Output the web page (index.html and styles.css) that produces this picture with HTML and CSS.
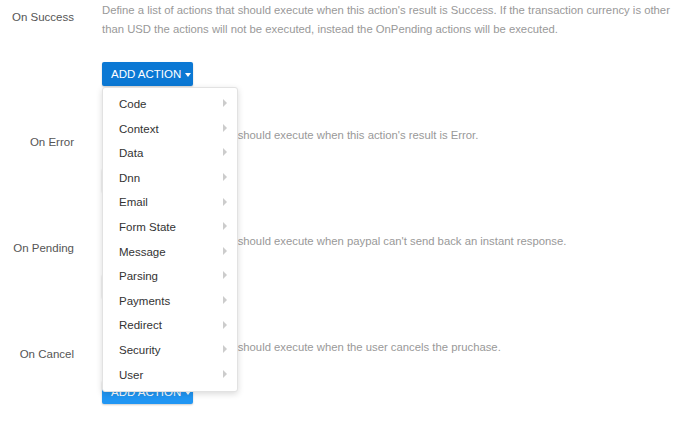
FILE: index.html
```html
<!DOCTYPE html>
<html>
<head>
<meta charset="utf-8">
<link rel="stylesheet" href="styles.css">
</head>
<body>
<div class="form">
  <div class="row">
    <div class="label">On Success</div>
    <div class="field">
      <p class="desc">Define a list of actions that should execute when this action's result is Success. If the transaction currency is other than USD the actions will not be executed, instead the OnPending actions will be executed.</p>
      <div class="dropdown">
        <button class="btn btn-active">ADD ACTION <span class="caret"></span></button>
        <ul class="menu">
          <li>Code<span class="arrow"></span></li>
          <li>Context<span class="arrow"></span></li>
          <li>Data<span class="arrow"></span></li>
          <li>Dnn<span class="arrow"></span></li>
          <li>Email<span class="arrow"></span></li>
          <li>Form State<span class="arrow"></span></li>
          <li>Message<span class="arrow"></span></li>
          <li>Parsing<span class="arrow"></span></li>
          <li>Payments<span class="arrow"></span></li>
          <li>Redirect<span class="arrow"></span></li>
          <li>Security<span class="arrow"></span></li>
          <li>User<span class="arrow"></span></li>
        </ul>
      </div>
    </div>
  </div>
  <div class="row">
    <div class="label">On Error</div>
    <div class="field">
      <p class="desc">Define a list of actions that should execute when this action's result is Error.</p>
      <button class="btn">ADD ACTION <span class="caret"></span></button>
    </div>
  </div>
  <div class="row">
    <div class="label">On Pending</div>
    <div class="field">
      <p class="desc">Define a list of actions that should execute when paypal can't send back an instant response.</p>
      <button class="btn">ADD ACTION <span class="caret"></span></button>
    </div>
  </div>
  <div class="row">
    <div class="label">On Cancel</div>
    <div class="field">
      <p class="desc">Define a list of actions that should execute when the user cancels the pruchase.</p>
      <button class="btn">ADD ACTION <span class="caret"></span></button>
    </div>
  </div>
</div>
</body>
</html>
```
FILE: styles.css
```css
html, body {
  margin: 0;
  padding: 0;
  background: #fff;
}
body {
  font-family: "Liberation Sans", Arial, sans-serif;
  font-size: 11.3px;
  color: #333;
}
.form {
  padding-top: 1px;
}
.row {
  display: grid;
  grid-template-columns: 74px 1fr;
  column-gap: 28px;
  margin-bottom: 40px;
}
.label {
  text-align: right;
  color: #555;
  padding-top: 7px;
  line-height: 19px;
  font-size: 11.5px;
}
.field {
  padding-right: 10px;
  display: flex;
  flex-direction: column;
  align-items: flex-start;
}
.desc {
  margin: 0 0 23px 0;
  color: #999;
  line-height: 19px;
  max-width: 590px;
}
.dropdown {
  position: relative;
}
.btn {
  height: 24px;
  width: 91px;
  padding: 0 0 0 9px;
  border: none;
  border-radius: 2px;
  background: #2196f3;
  color: #fff;
  font-family: "Liberation Sans", Arial, sans-serif;
  font-size: 11.5px;
  text-align: left;
  box-shadow: 0 1px 2px rgba(0,0,0,0.2);
  display: flex;
  align-items: center;
  gap: 4px;
}
.btn-active {
  background: #0b78d4;
}
.caret {
  width: 0;
  height: 0;
  border-left: 3.5px solid transparent;
  border-right: 3.5px solid transparent;
  border-top: 4px solid #fff;
  margin-top: 1px;
}
.menu {
  position: absolute;
  top: 25px;
  left: 0;
  z-index: 5;
  margin: 0;
  padding: 4px 0;
  list-style: none;
  width: 134px;
  background: #fff;
  border: 1px solid #e2e2e2;
  border-radius: 3px;
  box-shadow: 0 2px 6px rgba(0,0,0,0.15);
}
.menu li {
  line-height: 24.6px;
  padding-left: 16px;
  padding-right: 10px;
  display: flex;
  justify-content: space-between;
  align-items: center;
  color: #333;
  font-size: 11.5px;
}
.arrow {
  width: 0;
  height: 0;
  border-top: 4px solid transparent;
  border-bottom: 4px solid transparent;
  border-left: 4px solid #ccc;
  margin-top: -2px;
}
```
